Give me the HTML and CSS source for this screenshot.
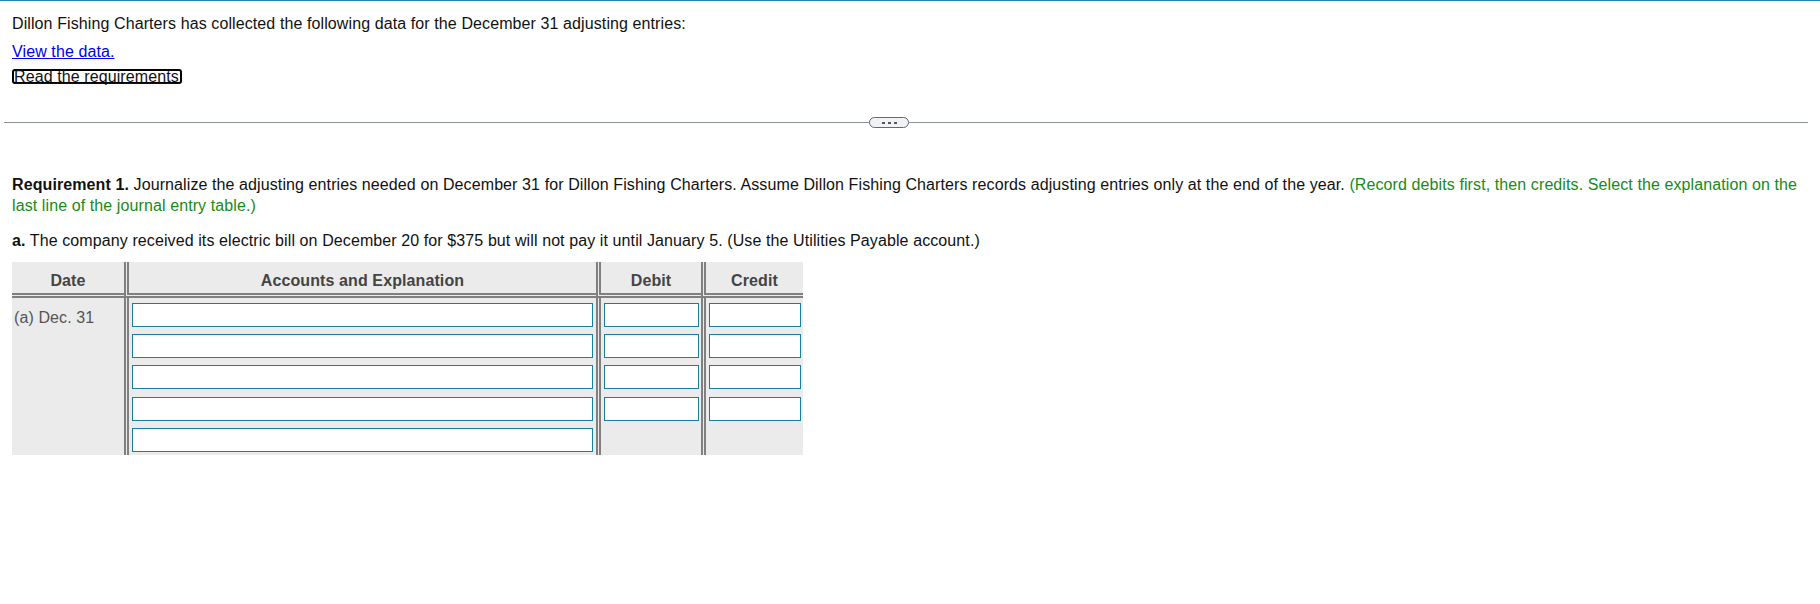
FILE: index.html
```html
<!DOCTYPE html>
<html lang="en">
<head>
<meta charset="utf-8">
<title>Dillon Fishing Charters</title>
<link rel="stylesheet" href="styles.css">
</head>
<body>
<div class="page">
  <div class="intro">
    <p class="lead">Dillon Fishing Charters has collected the following data for the December 31 adjusting entries:</p>
    <p class="link-row view-row"><a class="data-link" href="#">View the data.</a></p>
    <p class="link-row"><a class="req-link" href="#">Read the requirements</a></p>
  </div>
  <div class="divider">
    <span class="rule rule-left"></span>
    <span class="more"><i></i><i></i><i></i></span>
    <span class="rule rule-right"></span>
  </div>
  <div class="question">
    <p class="req"><b>Requirement 1.</b> Journalize the adjusting entries needed on December 31 for Dillon Fishing Charters. Assume Dillon Fishing Charters records adjusting entries only at the end of the year. <span class="hint">(Record debits first, then credits. Select the explanation on the last line of the journal entry table.)</span></p>
    <p class="part"><b>a.</b> The company received its electric bill on December 20 for $375 but will not pay it until January 5. (Use the Utilities Payable account.)</p>
    <div class="journal">
      <div class="jh">Date</div>
      <div class="jh sep">Accounts and Explanation</div>
      <div class="jh sep">Debit</div>
      <div class="jh sep">Credit</div>
      <div class="jb-date">(a) Dec. 31</div>
      <div class="jb-col jb-acct sep">
        <input type="text"><input type="text"><input type="text"><input type="text"><input type="text">
      </div>
      <div class="jb-col jb-amt sep">
        <input type="text"><input type="text"><input type="text"><input type="text">
      </div>
      <div class="jb-col jb-amt sep">
        <input type="text"><input type="text"><input type="text"><input type="text">
      </div>
    </div>
  </div>
</div>
</body>
</html>
```
FILE: styles.css
```css
html, body {
  margin: 0;
  padding: 0;
  background: #ffffff;
}
body {
  font-family: "Liberation Sans", Arial, sans-serif;
  font-size: 16px;
  letter-spacing: 0.1px;
  color: #111111;
}
.page {
  border-top: 1px solid #1b87b0;
  padding-top: 12.8px;
}
p {
  margin: 0;
  line-height: 20.8px;
}
.intro {
  padding: 0 12px;
}
.lead {
  margin-bottom: 7px;
}
.view-row {
  margin-bottom: 5px;
}
.data-link {
  color: #0000ee;
  text-decoration: underline;
}
.req-link {
  display: inline-block;
  height: 11px;
  line-height: 11px;
  border: 2px solid #000000;
  border-radius: 3px;
  padding: 0 1px 0 0;
  color: #111111;
  text-decoration: underline;
  vertical-align: baseline;
}
.divider {
  display: flex;
  align-items: center;
  height: 12px;
  margin: 28.8px 12px 0 4px;
}
.rule {
  height: 1px;
  background: #8a9198;
}
.rule-left {
  width: 865px;
}
.rule-right {
  flex: 1;
}
.more {
  width: 40px;
  height: 11px;
  box-sizing: border-box;
  border: 1px solid #5f6b77;
  border-radius: 6px;
  background: #f0f2f4;
  display: flex;
  align-items: center;
  justify-content: center;
  gap: 3px;
}
.more i {
  display: block;
  width: 3px;
  height: 2px;
  background: #4d5762;
}
.question {
  padding: 0 12px;
  margin-top: 46.5px;
}
.hint {
  color: #188a18;
}
.part {
  margin-top: 14.4px;
}
.journal {
  margin-top: 9.7px;
  width: 791px;
  display: grid;
  grid-template-columns: 112px 472px 105px 102px;
  background: #ebebeb;
}
.jh {
  box-sizing: border-box;
  height: 36px;
  padding-top: 9.5px;
  border-bottom: 5px double #808080;
  text-align: center;
  font-weight: bold;
  color: #444444;
  line-height: 20.8px;
}
.sep {
  border-left: 5px double #808080;
}
.jb-date {
  padding: 10.2px 2px 0 2px;
  color: #555555;
  line-height: 20.8px;
}
.jb-col {
  display: flex;
  flex-direction: column;
  gap: 7.25px;
  padding: 5px 3px 3px 3px;
}
.jb-amt {
  padding: 5px 2.5px 3px 2.5px;
}
.jb-col input {
  display: block;
  width: 100%;
  height: 24px;
  box-sizing: border-box;
  margin: 0;
  padding: 0 3px;
  border: 1px solid #1c7c9c;
  border-radius: 0;
  background: #ffffff;
  font-family: "Liberation Sans", Arial, sans-serif;
  font-size: 14px;
}
```
